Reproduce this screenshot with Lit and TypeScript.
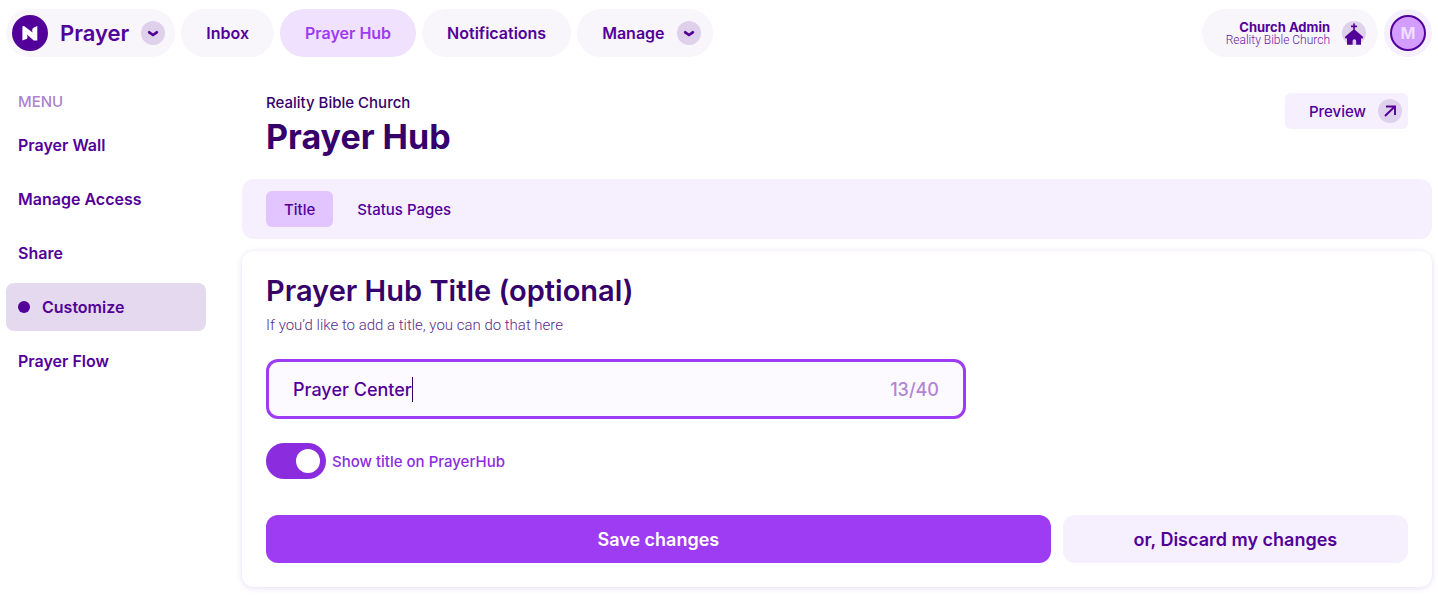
import { LitElement, html, css } from "lit";
import { customElement, state } from "lit/decorators.js";

const chevron = html`<svg class="badge" viewBox="0 0 24 24" aria-hidden="true">
  <circle cx="12" cy="12" r="12" fill="#dfd0eb" />
  <path d="M8.200 11.300l3.800 2.700 3.800-2.700" fill="none" stroke="#520099" stroke-width="2.700" stroke-linecap="round" stroke-linejoin="round" />
</svg>`;

const church = html`<svg class="badge" viewBox="0 0 24 24" aria-hidden="true">
  <circle cx="12" cy="12" r="12" fill="#dfd0eb" />
  <path d="M11.200 2.400h1.600v2.200H15v1.600h-2.200v2.600l4.400 3.800 4 3.400-1 1.800-1.200-.6V23.700h-4.800V20a1.800 1.800 0 0 0-3.600 0v3.700H5V17.200l-1.200.6-1-1.800 4-3.400 4.400-3.800V6.200H9V4.600h2.200z" fill="#520099" />
</svg>`;

const arrow = html`<svg class="badge" viewBox="0 0 24 24" aria-hidden="true">
  <circle cx="12" cy="12" r="12" fill="#dfd0eb" />
  <path d="M7 17L16.500 7.800M8 7.500h9v8.500" fill="none" stroke="#520099" stroke-width="1.900" />
</svg>`;

const logo = html`<svg class="logo" viewBox="0 0 36 36" aria-hidden="true">
  <circle cx="18" cy="18" r="18" fill="#520099" />
  <path d="M10.400 12.200q0-1.600 1.600-1.100l8.600 6.500q-1.200-3 .4-4.600l4.300-2v14.600h-3.600L15 19.600q1 2.600 0 4.200l-4.600 1.800z" fill="#fff" />
</svg>`;

@customElement("app-root")
export class AppRoot extends LitElement {
  @state() private hubTitle = "Prayer Center";
  @state() private showTitle = true;

  static styles = css`
    :host {
      --deep: #520099;
      --ink: #36006a;
      --accent: #9e3cf3;
      --pill: #f8f5fb;
      --soft: #f6effe;
      display: block;
      font-family: Inter, "Liberation Sans", sans-serif;
      font-size: 16px;
      font-weight: 600;
      color: var(--deep);
    }
    *, *::before, *::after { box-sizing: border-box; }
    a { color: inherit; text-decoration: none; }
    button, input { font: inherit; color: inherit; border: 0; margin: 0; padding: 0; background: none; }
    button { cursor: pointer; }
    h1, h2, p { margin: 0; }
    .badge { display: block; width: 24px; height: 24px; flex: none; }
    .logo { display: block; width: 36px; height: 36px; flex: none; }

    .top { display: flex; align-items: center; gap: 6px; padding: 9px 6px 0; }
    .pill {
      display: flex; align-items: center; gap: 12px; height: 48px;
      padding: 0 25px; border-radius: 24px; background: var(--pill); white-space: nowrap;
    }
    .brand { padding: 0 10px 0 6px; font-size: 22px; }
    .more { padding-right: 12px; }
    .current { background: #f0e1fe; color: var(--accent); }
    .account { margin-left: auto; padding: 0 12px 0 24px; text-align: right; }
    .who { display: flex; flex-direction: column; padding-top: 2px; font: 300 12px/13px Roboto, sans-serif; color: #6a20a8; }
    .who strong { font: 700 13px/13px Inter, sans-serif; color: var(--deep); }
    .avatar { width: 48px; height: 48px; padding: 6px; border-radius: 50%; background: var(--soft); }
    .face {
      display: flex; align-items: center; justify-content: center; width: 36px; height: 36px;
      border: 2px solid var(--deep); border-radius: 50%; background: #d29dff; color: #f0defe;
      font-size: 16px; font-weight: 700;
    }

    .body { display: grid; grid-template-columns: 200px minmax(0, 1fr); gap: 36px; padding: 36px 6px 12px; }
    .side { display: flex; flex-direction: column; gap: 6px; }
    .label { padding: 0 12px 4px; font-size: 15px; line-height: 18px; font-weight: 500; color: #ad82cf; }
    .item { display: flex; align-items: center; gap: 12px; height: 48px; padding: 0 12px; border-radius: 8px; }
    .item.on { background: #e5d9ef; }
    .item.on::before { content: ""; width: 12px; height: 12px; border-radius: 50%; background: var(--deep); }

    .head { display: flex; align-items: flex-start; justify-content: space-between; padding: 0 24px 18px; }
    .org { font-size: 15px; line-height: 20px; font-weight: 500; color: var(--ink); }
    h1 { font-size: 34px; line-height: 48px; font-weight: 700; color: var(--ink); }
    .preview {
      display: flex; align-items: center; gap: 12px; height: 36px; padding: 0 6px 0 24px;
      border-radius: 6px; background: var(--soft); font-size: 15px; font-weight: 500;
    }
    .tabs { display: flex; gap: 6px; padding: 12px 24px; border-radius: 12px; background: var(--soft); }
    .tab { height: 36px; padding: 0 18px; border-radius: 6px; font-size: 15px; font-weight: 500; }
    .tab.on { background: #e2c4ff; }

    .card { margin-top: 12px; padding: 24px; border-radius: 12px; background: #fff; box-shadow: 0 1px 6px #e6dbf4; }
    h2 { font-size: 29px; line-height: 32px; font-weight: 600; color: var(--ink); }
    .hint { margin-top: 6px; font: 300 15px/24px Roboto, sans-serif; color: #5b2a88; }
    .field {
      display: flex; align-items: center; max-width: 700px; height: 60px; margin-top: 22px; padding: 0 24px;
      border: 3px solid var(--accent); border-radius: 12px; background: #fcf9ff; font-size: 18px;
    }
    .field input { field-sizing: content; min-width: 1px; font-weight: 500; caret-color: transparent; outline: none; }
    .caret { width: 1px; height: 25px; background: var(--ink); }
    .count { margin-left: auto; font-weight: 500; color: #b185d3; }
    .toggle { display: flex; align-items: center; gap: 6px; width: fit-content; margin-top: 24px; font-size: 15px; font-weight: 500; color: #8b2cdf; cursor: pointer; }
    .toggle input {
      appearance: none; display: flex; align-items: center; width: 60px; height: 36px; padding: 6px;
      border-radius: 18px; background: #cdb6e0; cursor: pointer;
    }
    .toggle input::before { content: ""; width: 24px; height: 24px; border-radius: 50%; background: #fff; }
    .toggle input:checked { justify-content: flex-end; background: #8b2cdf; }
    .actions { display: grid; grid-template-columns: 25fr 11fr; gap: 12px; margin-top: 36px; }
    .actions button { height: 48px; border-radius: 12px; font-size: 18px; }
    .actions .save { background: var(--accent); color: #fff; }
    .actions .discard { background: var(--soft); }
  `;

  private onInput(e: Event) {
    this.hubTitle = (e.target as HTMLInputElement).value;
  }

  private onToggle(e: Event) {
    this.showTitle = (e.target as HTMLInputElement).checked;
  }

  render() {
    return html`
      <header class="top">
        <button class="pill brand">${logo}<span>Prayer</span>${chevron}</button>
        <a class="pill" href="#inbox">Inbox</a>
        <a class="pill current" href="#hub" aria-current="page">Prayer Hub</a>
        <a class="pill" href="#notifications">Notifications</a>
        <button class="pill more">Manage${chevron}</button>
        <button class="pill account">
          <span class="who"><strong>Church Admin</strong><span>Reality Bible Church</span></span>${church}
        </button>
        <button class="avatar" aria-label="Account"><span class="face">M</span></button>
      </header>
      <div class="body">
        <nav class="side">
          <div class="label">MENU</div>
          ${["Prayer Wall", "Manage Access", "Share", "Customize", "Prayer Flow"].map(
            (name) => html`<a class="item ${name === "Customize" ? "on" : ""}" href="#">${name}</a>`
          )}
        </nav>
        <main>
          <div class="head">
            <div>
              <p class="org">Reality Bible Church</p>
              <h1>Prayer Hub</h1>
            </div>
            <a class="preview" href="#preview">Preview${arrow}</a>
          </div>
          <div class="tabs" role="tablist">
            <button class="tab on" role="tab" aria-selected="true">Title</button>
            <button class="tab" role="tab" aria-selected="false">Status Pages</button>
          </div>
          <section class="card">
            <h2 id="title-label">Prayer Hub Title (optional)</h2>
            <p class="hint">If you’d like to add a title, you can do that here</p>
            <div class="field">
              <input type="text" maxlength="40" aria-labelledby="title-label" .value=${this.hubTitle} @input=${this.onInput} />
              <span class="caret"></span>
              <span class="count">${this.hubTitle.length}/40</span>
            </div>
            <label class="toggle">
              <input type="checkbox" role="switch" .checked=${this.showTitle} @change=${this.onToggle} />
              Show title on PrayerHub
            </label>
            <div class="actions">
              <button class="save">Save changes</button>
              <button class="discard">or, Discard my changes</button>
            </div>
          </section>
        </main>
      </div>
    `;
  }
}
